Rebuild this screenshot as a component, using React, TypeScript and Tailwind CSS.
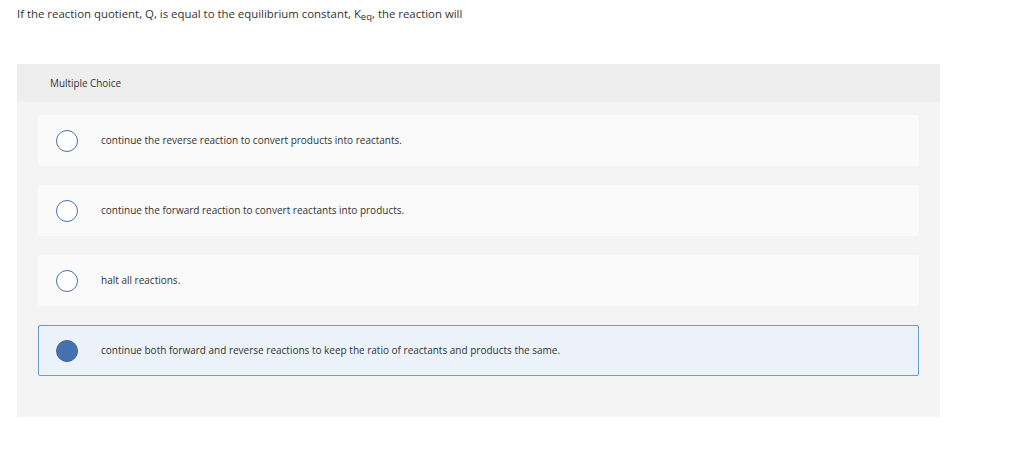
const options = [
  'continue the reverse reaction to convert products into reactants.',
  'continue the forward reaction to convert reactants into products.',
  'halt all reactions.',
  'continue both forward and reverse reactions to keep the ratio of reactants and products the same.',
];

const selected = 3;

export default function App() {
  return (
    <div className="w-[1024px] h-[454px] bg-white font-['Open_Sans',sans-serif] text-[#333]">
      <p className="pl-[17px] pt-[7px] text-[11.4px] leading-[14px]">
        If the reaction quotient, Q, is equal to the equilibrium constant, K
        <sub className="text-[9.5px]">eq</sub>, the reaction will
      </p>

      <div className="ml-[17px] mt-[43px] w-[923px] h-[353px] bg-[#f4f4f4]">
        <div className="h-[38px] bg-[#eeeeee] pl-[33px] flex items-center text-[9.9px] pt-[1px]">
          Multiple Choice
        </div>

        <div className="flex flex-col gap-[19px] pt-[13px] px-[21px]">
          {options.map((text, i) => {
            const on = i === selected;
            return (
              <div
                key={i}
                className={
                  on
                    ? 'h-[51px] flex items-center bg-[#ebf2fa] border border-[#7099cf] rounded-[2px]'
                    : 'h-[51px] flex items-center bg-[#fafafa] border border-transparent rounded-[2px]'
                }
              >
                <span
                  className={
                    on
                      ? 'ml-[17px] w-[22px] h-[22px] rounded-full bg-[#4471b0] border-[1.5px] border-[#3d67a3]'
                      : 'ml-[17px] w-[22px] h-[22px] rounded-full bg-white border-[1.5px] border-[#4a72a8]'
                  }
                />
                <span className="ml-[23px] text-[10px]">{text}</span>
              </div>
            );
          })}
        </div>
      </div>
    </div>
  );
}
